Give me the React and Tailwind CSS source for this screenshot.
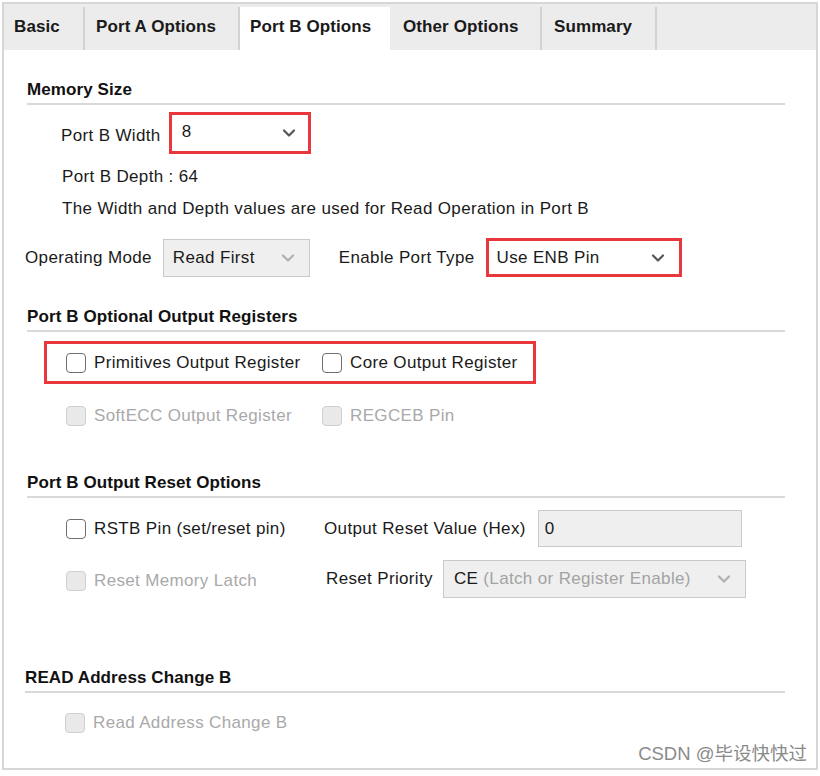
import React from "react";

const F = { fontFamily: '"Liberation Sans", Arial, "Noto Sans CJK SC", sans-serif' };

function Chevron({ color = "#555" }) {
  return (
    <svg width="14" height="10" viewBox="0 0 14 10">
      <path d="M2 2.5 L7 7.5 L12 2.5" fill="none" stroke={color} strokeWidth="2.2" strokeLinecap="round" strokeLinejoin="round" />
    </svg>
  );
}

function Box({ disabled }) {
  return (
    <div
      className={
        disabled
          ? "w-[20px] h-[20px] rounded-[4px] border border-[#d0d0d0] bg-[#e9e9e9] shrink-0"
          : "w-[20px] h-[20px] rounded-[4px] border-[1.5px] border-[#6f6f6f] bg-white shrink-0"
      }
    />
  );
}

function Check({ label, disabled }) {
  return (
    <div className="flex items-center gap-[8px] h-[20px]">
      <Box disabled={disabled} />
      <span className={disabled ? "text-[#a9a9a9]" : "text-[#1a1a1a]"}>{label}</span>
    </div>
  );
}

function Header({ children, left = 23 }) {
  return (
    <div className="mr-[31px]" style={{ marginLeft: left }}>
      <div className="h-[23px] leading-[20px] font-bold text-[17px] tracking-[0.1px] text-[#111]">{children}</div>
      <div className="h-[2px] bg-[#d9d9d9]" />
    </div>
  );
}

export default function App() {
  const tabs = [
    { t: "Basic", w: 81, pl: 10 },
    { t: "Port A Options", w: 155, pl: 11 },
    { t: "Port B Options", w: 150, pl: 10, active: true },
    { t: "Other Options", w: 152, pl: 13 },
    { t: "Summary", w: 115, pl: 12 },
  ];
  return (
    <div className="w-[820px] h-[776px] bg-white pt-[2px] pl-[2px] text-[17px] leading-[20px] tracking-[0.35px] text-[#1a1a1a]" style={F}>
      <div className="relative w-[816px] h-[768px] border-2 border-[#d6d6d6] bg-white flex flex-col">
        {/* Tab strip */}
        <div className="h-[46px] bg-[#ececec] flex items-end shrink-0">
          {tabs.map((tb) => (
            <div
              key={tb.t}
              className={
                "h-[43px] flex items-center font-bold tracking-[0.1px] " +
                (tb.active ? "bg-white" : "border-r-2 border-[#d3d3d3]")
              }
              style={{ width: tb.w, paddingLeft: tb.pl }}
            >
              <span className="mt-[-4px]">{tb.t}</span>
            </div>
          ))}
        </div>

        {/* Content */}
        <div className="flex flex-col">
          <div className="mt-[30px]">
            <Header>Memory Size</Header>
          </div>

          <div className="flex items-start ml-[57px] mt-[7px] h-[42px]">
            <span className="mt-[14px]">Port B Width</span>
            <div className="ml-[8px] w-[142px] h-[42px] border-[3px] border-[#e8373d] flex items-start justify-between pl-[10px] pr-[12px]">
              <span className="mt-[7px]">8</span>
              <span className="mt-[13px]"><Chevron /></span>
            </div>
          </div>

          <div className="ml-[58px] mt-[13px]">Port B Depth : 64</div>
          <div className="ml-[58px] mt-[12px]">The Width and Depth values are used for Read Operation in Port B</div>

          <div className="flex items-center ml-[21px] mt-[19px] h-[39px]">
            <span>Operating Mode</span>
            <div className="ml-[11px] w-[147px] h-[38px] bg-[#efefef] border border-[#c9c9c9] flex items-center justify-between pl-[9px] pr-[14px]">
              <span>Read First</span>
              <Chevron color="#b0b0b0" />
            </div>
            <span className="ml-[29px]">Enable Port Type</span>
            <div className="ml-[11px] w-[196px] h-[39px] border-[3px] border-[#e8373d] flex items-center justify-between pl-[8px] pr-[14px]">
              <span>Use ENB Pin</span>
              <Chevron />
            </div>
          </div>

          <div className="mt-[30px]">
            <Header>Port B Optional Output Registers</Header>
          </div>

          <div className="ml-[40px] mt-[9px] w-[492px] h-[43px] border-[3px] border-[#e8373d] flex items-center pl-[19px]">
            <div className="w-[256px]"><Check label="Primitives Output Register" /></div>
            <Check label="Core Output Register" />
          </div>

          <div className="ml-[62px] mt-[22px] flex items-center">
            <div className="w-[256px]"><Check label="SoftECC Output Register" disabled /></div>
            <Check label="REGCEB Pin" disabled />
          </div>

          <div className="mt-[47px]">
            <Header>Port B Output Reset Options</Header>
          </div>

          <div className="ml-[62px] mt-[12px] flex items-center h-[37px]">
            <div className="w-[258px]"><Check label="RSTB Pin (set/reset pin)" /></div>
            <span>Output Reset Value (Hex)</span>
            <div className="ml-[12px] w-[204px] h-[37px] bg-[#efefef] border border-[#c9c9c9] flex items-center pl-[6px]">
              <span>0</span>
            </div>
          </div>

          <div className="ml-[62px] mt-[13px] flex items-center h-[38px]">
            <div className="w-[260px] mt-[4px]"><Check label="Reset Memory Latch" disabled /></div>
            <span>Reset Priority</span>
            <div className="ml-[10px] w-[303px] h-[38px] bg-[#efefef] border border-[#c9c9c9] flex items-center justify-between pl-[10px] pr-[14px]">
              <span>
                CE <span className="text-[#a3a3a3]">(Latch or Register Enable)</span>
              </span>
              <Chevron color="#b0b0b0" />
            </div>
          </div>

          <div className="mt-[70px]">
            <Header left={21}>READ Address Change B</Header>
          </div>

          <div className="ml-[61px] mt-[20px]">
            <Check label="Read Address Change B" disabled />
          </div>
        </div>

        <div className="absolute right-[9px] bottom-[2px] text-[18.5px] tracking-normal text-[#8a8a8a] leading-[24px]">CSDN @毕设快快过</div>
      </div>
    </div>
  );
}
